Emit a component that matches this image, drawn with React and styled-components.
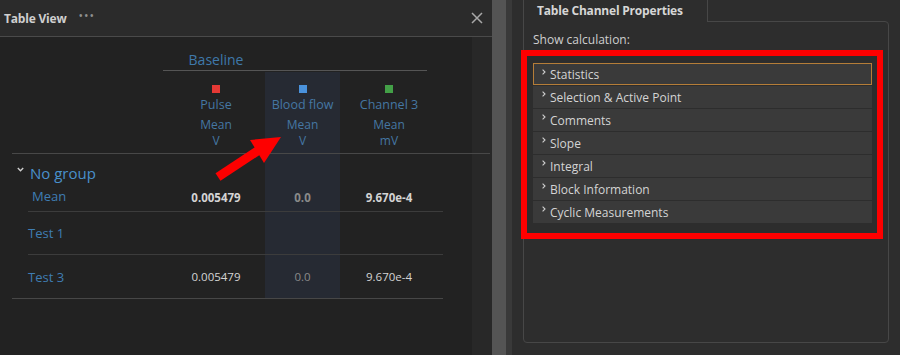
import styled, { createGlobalStyle } from "styled-components";

const GlobalStyle = createGlobalStyle`
  html, body {
    margin: 0;
    padding: 0;
    background: #222222;
  }
  * {
    box-sizing: border-box;
  }
  body {
    font-family: "Open Sans", "Noto Sans", sans-serif;
  }
`;

const Page = styled.div`
  position: relative;
  display: flex;
  width: 900px;
  height: 355px;
  overflow: hidden;
`;

/* ---------- left: table view ---------- */

const LeftPanel = styled.section`
  width: 492px;
  display: flex;
  flex-direction: column;
`;

const PanelHeader = styled.header`
  height: 37px;
  display: flex;
  align-items: center;
  padding: 0 7px 0 4px;
  background: #2b2b2b;
  border-bottom: 1px solid #4a4a4a;
`;

const Title = styled.span`
  font-size: 12px;
  font-weight: 700;
  color: #cfcfcf;
  letter-spacing: -0.2px;
`;

const Dots = styled.span`
  margin-left: 12px;
  color: #8f8f8f;
  font-size: 12px;
  letter-spacing: 1px;
  line-height: 1;
  padding-bottom: 4px;
`;

const CloseButton = styled.button`
  margin-left: auto;
  width: 16px;
  height: 16px;
  padding: 0;
  border: 0;
  background: none;
  display: flex;
  align-items: center;
  justify-content: center;
`;

const LeftBody = styled.div`
  flex: 1;
  display: flex;
  background: #282828;
`;

const TableArea = styled.div`
  width: 472px;
  background: #222222;
  padding: 12px 0 0 12px;
  display: flex;
  flex-direction: column;
`;

const Row = styled.div`
  display: grid;
  grid-template-columns: ${(p) => 155 - (p.$indent || 0)}px 75px 75px 75px;
  column-gap: 11.5px;
  margin-left: ${(p) => p.$indent || 0}px;
  width: ${(p) => p.$width || 431 - (p.$indent || 0)}px;
  height: ${(p) => p.$height}px;
  border-bottom: ${(p) => (p.$line ? `1px solid ${p.$line}` : "none")};
`;

const BaselineCell = styled.div`
  grid-column: 2 / 5;
  margin-left: -15.5px;
  border-bottom: 1px solid #555555;
  height: 22px;
  font-size: 14px;
  line-height: 21px;
  color: #3f79ab;
`;

const BaselineLabel = styled.span`
  display: block;
  width: 106px;
  text-align: center;
`;

const Cell = styled.div`
  display: flex;
  align-items: center;
  justify-content: center;
  background: ${(p) => (p.$hl ? "#262a33" : "transparent")};
  font-size: 11.5px;
  font-weight: ${(p) => (p.$bold ? 700 : 400)};
  color: ${(p) => (p.$dim ? "#8a8a8a" : "#d4d4d4")};
`;

const HeadCell = styled.div`
  display: flex;
  flex-direction: column;
  align-items: center;
  padding-top: 13px;
  background: ${(p) => (p.$hl ? "#262a33" : "transparent")};
  font-size: 12px;
  line-height: 16px;
  color: #4577a3;
`;

const Swatch = styled.span`
  width: 8px;
  height: 8px;
  background: ${(p) => p.$color};
  margin-bottom: 4px;
`;

const ChannelName = styled.span`
  font-size: 12.5px;
  white-space: nowrap;
  margin-bottom: 4px;
`;

const LabelCell = styled.div`
  display: flex;
  align-items: center;
  padding-left: ${(p) => p.$pad || 0}px;
  padding-bottom: ${(p) => p.$raise || 0}px;
  font-size: 13px;
  color: #3f7db3;
`;

const GroupLabel = styled.div`
  display: flex;
  align-items: flex-end;
  padding: 0 0 0 5px;
  gap: 6px;
  font-size: 15px;
  line-height: 22px;
  color: #4990cb;
`;

/* ---------- splitter ---------- */

const Splitter = styled.div`
  width: 14px;
  background: #545454;
`;

const SplitterEdge = styled.div`
  width: 6px;
  background: #393939;
`;

/* ---------- right: properties ---------- */

const RightPanel = styled.section`
  flex: 1;
  background: #2d2d2d;
  padding: 0 11px 12px;
  display: flex;
  flex-direction: column;
`;

const Tab = styled.div`
  position: relative;
  z-index: 1;
  width: 185px;
  height: 22px;
  margin-bottom: -1px;
  padding: 2px 0 0 13px;
  background: #2d2d2d;
  border: 1px solid #474747;
  border-top: 0;
  border-bottom: 0;
  font-size: 12px;
  font-weight: 700;
  color: #d6d6d6;
  letter-spacing: -0.2px;
`;

const PropBox = styled.div`
  flex: 1;
  border: 1px solid #474747;
  border-radius: 0 4px 4px 4px;
  padding: 9px 0 0 9px;
`;

const ShowLabel = styled.div`
  font-size: 12px;
  line-height: 18px;
  color: #cfcfcf;
`;

const Highlight = styled.div`
  margin: 1px 0 0 -12px;
  width: 362px;
  border: 6px solid #fe0000;
  padding: 7px 5px 10px 6px;
  display: flex;
  flex-direction: column;
  gap: 1px;
`;

const Section = styled.div`
  height: 22px;
  display: flex;
  align-items: center;
  gap: 4px;
  padding-left: ${(p) => (p.$active ? 8 : 9)}px;
  background: #3a3a3a;
  border: ${(p) => (p.$active ? "1px solid #b57d38" : "none")};
  font-size: 12px;
  color: #d4d4d4;
`;

const SectionChevron = styled.svg`
  align-self: flex-start;
  margin-top: 5px;
  flex: none;
`;

const Overlay = styled.svg`
  position: absolute;
  left: 0;
  top: 0;
  pointer-events: none;
`;

const channels = [
  { name: "Pulse", unit: "V", color: "#e53935" },
  { name: "Blood flow", unit: "V", color: "#4a92dc" },
  { name: "Channel 3", unit: "mV", color: "#43a047" },
];

const sections = [
  "Statistics",
  "Selection & Active Point",
  "Comments",
  "Slope",
  "Integral",
  "Block Information",
  "Cyclic Measurements",
];

const ValueCells = ({ values, bold }) =>
  values.map((v, i) => (
    <Cell key={i} $hl={i === 1} $dim={i === 1} $bold={bold}>
      {v}
    </Cell>
  ));

export default function App() {
  return (
    <Page>
      <GlobalStyle />
      <LeftPanel>
        <PanelHeader>
          <Title>Table View</Title>
          <Dots>•••</Dots>
          <CloseButton aria-label="close">
            <svg width="12" height="12" viewBox="0 0 12 12">
              <path d="M1 1L11 11M11 1L1 11" stroke="#a8a8a8" strokeWidth="1.5" />
            </svg>
          </CloseButton>
        </PanelHeader>
        <LeftBody>
          <TableArea>
            <Row $height={23}>
              <BaselineCell>
                <BaselineLabel>Baseline</BaselineLabel>
              </BaselineCell>
            </Row>
            <Row $height={82} $width={478} $line="#484848">
              <div />
              {channels.map((c, i) => (
                <HeadCell key={c.name} $hl={i === 1}>
                  <Swatch $color={c.color} />
                  <ChannelName>{c.name}</ChannelName>
                  <span>Mean</span>
                  <span>{c.unit}</span>
                </HeadCell>
              ))}
            </Row>
            <Row $height={30}>
              <GroupLabel>
                <svg width="7" height="5" viewBox="0 0 7 5" style={{ marginBottom: 12 }}>
                  <path d="M0.8 1L3.5 3.7L6.2 1" stroke="#d0d0d0" strokeWidth="1.4" fill="none" />
                </svg>
                No group
              </GroupLabel>
              <Cell />
              <Cell $hl />
              <Cell />
            </Row>
            <Row $height={28} $indent={16} $line="#3c3c3c">
              <LabelCell $pad={4} $raise={4}>Mean</LabelCell>
              <ValueCells values={["0.005479", "0.0", "9.670e-4"]} bold />
            </Row>
            <Row $height={43} $indent={16} $line="#3c3c3c">
              <LabelCell>Test 1</LabelCell>
              <ValueCells values={["", "", ""]} />
            </Row>
            <Row $height={44} $line="#474747">
              <LabelCell $pad={16}>Test 3</LabelCell>
              <ValueCells values={["0.005479", "0.0", "9.670e-4"]} />
            </Row>
          </TableArea>
        </LeftBody>
      </LeftPanel>

      <Splitter />
      <SplitterEdge />

      <RightPanel>
        <Tab>Table Channel Properties</Tab>
        <PropBox>
          <ShowLabel>Show calculation:</ShowLabel>
          <Highlight>
            {sections.map((s, i) => (
              <Section key={s} $active={i === 0}>
                <SectionChevron width="4" height="6" viewBox="0 0 4 6">
                  <path d="M0.6 0.6L3 3L0.6 5.4" stroke="#cfcfcf" strokeWidth="1.1" fill="none" />
                </SectionChevron>
                {s}
              </Section>
            ))}
          </Highlight>
        </PropBox>
      </RightPanel>

      <Overlay width="900" height="355" viewBox="0 0 900 355">
        <path d="M218 177L259 150" stroke="#fe0000" strokeWidth="9" />
        <polygon points="250,140 281,137 264,163" fill="#fe0000" />
      </Overlay>
    </Page>
  );
}
